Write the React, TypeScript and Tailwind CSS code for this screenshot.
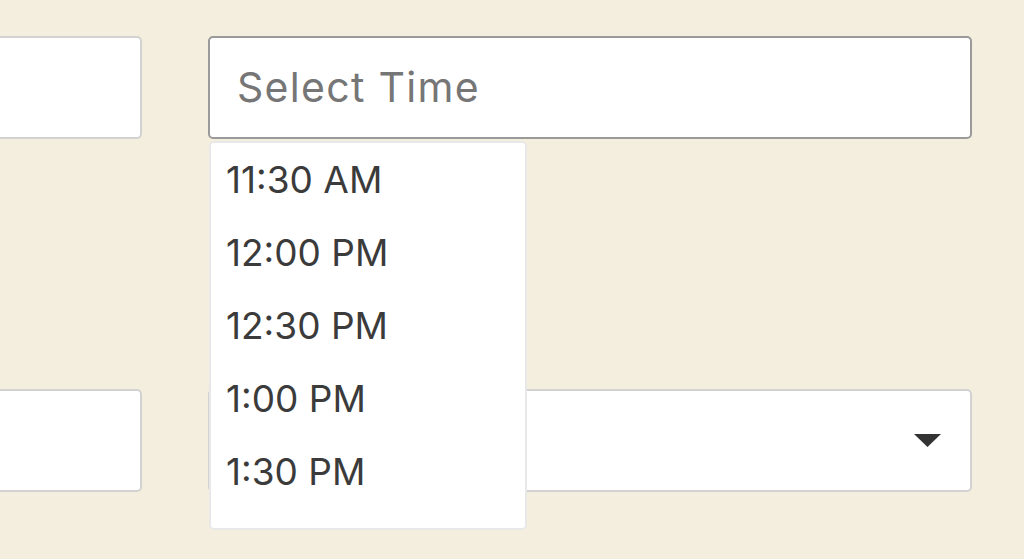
const times = ['11:30 AM', '12:00 PM', '12:30 PM', '1:00 PM', '1:30 PM']

export default function App() {
  return (
    <div
      className="h-[559px] w-[1024px] overflow-hidden bg-[#f4eedf]"
      style={{ fontFamily: 'Inter, "Noto Sans", sans-serif' }}
    >
      <div className="ml-[-60px] flex flex-col gap-[250px] pt-[36px]">
        {/* Row 1 */}
        <div className="flex gap-[66px]">
          <div className="h-[103px] w-[202px] rounded-[5px] border-2 border-[#d2d2d2] bg-white" />
          <div className="relative">
            <div className="flex h-[103px] w-[764px] items-center rounded-[5px] border-2 border-[#9a9a9a] bg-white pl-[27px] text-[41px] tracking-[1.3px] text-[#767676]">
              Select Time
            </div>
            {/* Dropdown */}
            <div className="absolute left-[1px] top-[105px] z-10 w-[318px] rounded-[5px] border-2 border-[#e8e8e8] bg-white pb-[20px]">
              {times.map((t) => (
                <div key={t} className="flex h-[73px] items-center pl-[15px] text-[37px] text-[#3b3b3b]">
                  {t}
                </div>
              ))}
            </div>
          </div>
        </div>
        {/* Row 2 */}
        <div className="flex gap-[66px]">
          <div className="h-[103px] w-[202px] rounded-[5px] border-2 border-[#d2d2d2] bg-white" />
          <div className="flex h-[103px] w-[764px] items-center justify-end rounded-[5px] border-2 border-[#d2d2d2] bg-white pr-[29px]">
            <svg width="27" height="13" viewBox="0 0 27 13">
              <path d="M0 0 L27 0 L13.5 13 Z" fill="#333" />
            </svg>
          </div>
        </div>
      </div>
    </div>
  )
}
